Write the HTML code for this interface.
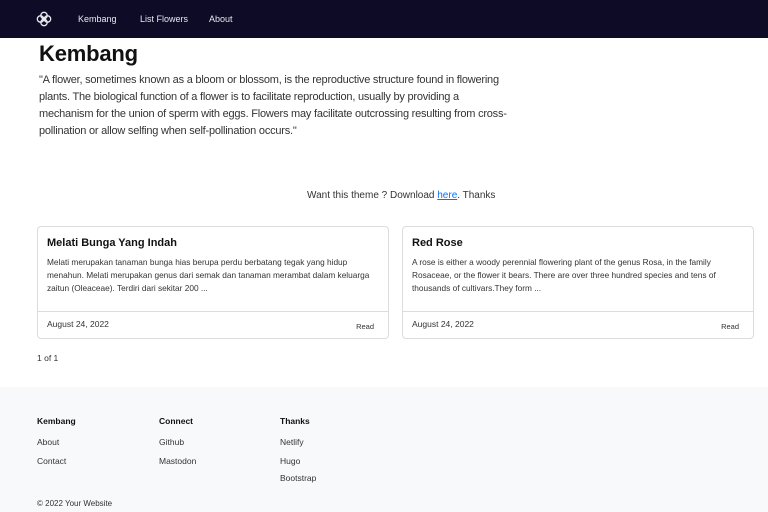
<!DOCTYPE html>
<html><head><meta charset="utf-8"><style>
*{margin:0;padding:0;box-sizing:border-box}
body{width:768px;height:512px;overflow:hidden;font-family:"Liberation Sans",sans-serif;color:#212529;background:#fff;position:relative}
.nav{position:absolute;left:0;top:0;width:768px;height:38px;background:#0d0b26}
.nav a{position:absolute;top:14px;color:#e8e8f0;font-size:9px;text-decoration:none}
.abs{position:absolute;white-space:nowrap}
h1{position:absolute;left:39px;top:41px;font-size:22px;font-weight:bold;color:#111;letter-spacing:-0.2px}
.p{position:absolute;left:39px;top:72px;font-size:11px;line-height:17px;color:#333;letter-spacing:-0.22px}
.card{position:absolute;top:226px;width:352px;height:113px;border:1px solid #dcdcdc;border-radius:4px}
.card h3{position:absolute;left:9px;top:10px;font-size:11px;font-weight:bold;color:#111}
.card .t{position:absolute;left:9px;top:29px;font-size:8.3px;line-height:13px;color:#333;white-space:nowrap}
.card .f{position:absolute;left:0;top:84px;width:100%;border-top:1px solid #dcdcdc}
.card .d{position:absolute;left:9px;top:92px;font-size:8.5px;color:#333}
.card .r{position:absolute;right:14px;top:95px;font-size:7.5px;color:#333}
.foot{position:absolute;left:0;top:387px;width:768px;height:125px;background:#f8f9fa}
.foot .h{font-size:8.5px;font-weight:bold;color:#111}
.foot .l{font-size:8.5px;color:#333}
</style></head><body>
<div class="nav">
<svg style="position:absolute;left:36px;top:11px" width="16" height="16" viewBox="0 0 16 16" fill="none" stroke="#e8e8f0" stroke-width="1.3"><circle cx="8" cy="4.5" r="3.2"/><circle cx="8" cy="11.5" r="3.2"/><circle cx="4.5" cy="8" r="3.2"/><circle cx="11.5" cy="8" r="3.2"/><circle cx="8" cy="8" r="1.5" fill="#e8e8f0"/></svg>
<a style="left:78px">Kembang</a><a style="left:140px">List Flowers</a><a style="left:209px">About</a>
</div>
<h1>Kembang</h1>
<div class="p">"A flower, sometimes known as a bloom or blossom, is the reproductive structure found in flowering<br>plants. The biological function of a flower is to facilitate reproduction, usually by providing a<br>mechanism for the union of sperm with eggs. Flowers may facilitate outcrossing resulting from cross-<br>pollination or allow selfing when self-pollination occurs."</div>
<div class="abs" style="left:307px;top:190px;font-size:10px;color:#333">Want this theme ? Download <span style="color:#0d6efd;text-decoration:underline">here</span>. Thanks</div>
<div class="card" style="left:37px"><h3>Melati Bunga Yang Indah</h3><div class="t">Melati merupakan tanaman bunga hias berupa perdu berbatang tegak yang hidup<br>menahun. Melati merupakan genus dari semak dan tanaman merambat dalam keluarga<br>zaitun (Oleaceae). Terdiri dari sekitar 200 ...</div><div class="f"></div><div class="d">August 24, 2022</div><div class="r">Read</div></div>
<div class="card" style="left:402px"><h3>Red Rose</h3><div class="t">A rose is either a woody perennial flowering plant of the genus Rosa, in the family<br>Rosaceae, or the flower it bears. There are over three hundred species and tens of<br>thousands of cultivars.They form ...</div><div class="f"></div><div class="d">August 24, 2022</div><div class="r">Read</div></div>
<div class="abs" style="left:37px;top:353px;font-size:8.5px;color:#333">1 of 1</div>
<div class="foot">
<div class="abs h" style="left:37px;top:29px">Kembang</div>
<div class="abs l" style="left:37px;top:50px">About</div>
<div class="abs l" style="left:37px;top:69px">Contact</div>
<div class="abs h" style="left:159px;top:29px">Connect</div>
<div class="abs l" style="left:159px;top:50px">Github</div>
<div class="abs l" style="left:159px;top:69px">Mastodon</div>
<div class="abs h" style="left:280px;top:29px">Thanks</div>
<div class="abs l" style="left:280px;top:50px">Netlify</div>
<div class="abs l" style="left:280px;top:69px">Hugo</div>
<div class="abs l" style="left:280px;top:86px">Bootstrap</div>
<div class="abs l" style="left:37px;top:112px;font-size:8px">© 2022 Your Website</div>
</div>
</body></html>
